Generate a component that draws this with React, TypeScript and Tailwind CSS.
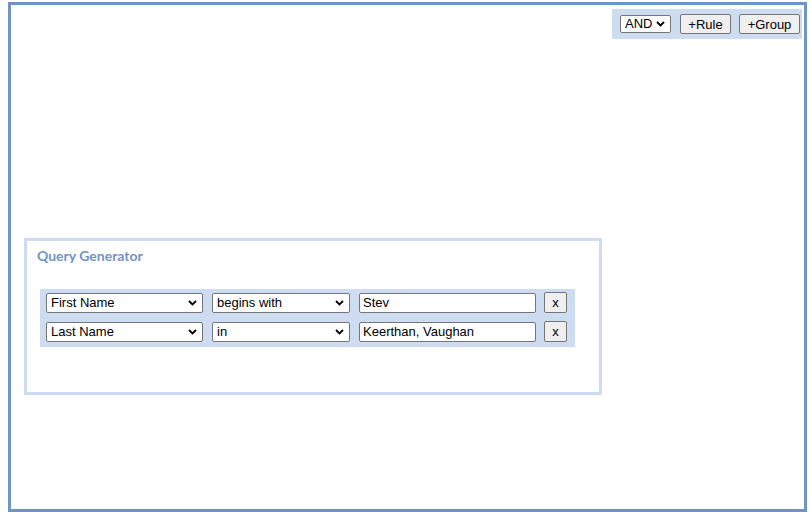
import React from 'react';

const Chevron: React.FC = () => (
  <svg className="pointer-events-none absolute right-[6px] top-1/2 -translate-y-1/2" width="9" height="6" viewBox="0 0 9 6">
    <path d="M1 1 L4.5 4.5 L8 1" fill="none" stroke="#000" strokeWidth="1.8" />
  </svg>
);

interface SelectProps {
  value: string;
  options: string[];
  className: string;
}

const Select: React.FC<SelectProps> = ({ value, options, className }) => (
  <div className={`relative ${className}`}>
    <select
      defaultValue={value}
      className="block h-full w-full appearance-none rounded-[2px] border border-[#767676] bg-white py-0 pl-[4px] pr-[18px] text-[13px] leading-[16px] text-black outline-none"
    >
      {options.map((o) => (
        <option key={o}>{o}</option>
      ))}
    </select>
    <Chevron />
  </div>
);

const Button: React.FC<{ label: string; className: string }> = ({ label, className }) => (
  <button className={`block rounded-[2px] border border-[#767676] bg-[#efefef] text-[13px] leading-none text-black ${className}`}>
    {label}
  </button>
);

const fields = ['First Name', 'Last Name', 'Email'];
const operators = ['begins with', 'in', 'equals', 'contains'];

const rules = [
  { field: 'First Name', op: 'begins with', value: 'Stev' },
  { field: 'Last Name', op: 'in', value: 'Keerthan, Vaughan' },
];

export default function App() {
  return (
    <div className="pl-[8px] pt-[2px] font-['Liberation_Sans',Arial,sans-serif]">
      <div className="h-[510px] w-[799px] border-[3px] border-[#7094c3] bg-white">
        {/* top-right group controls */}
        <div className="flex justify-end pr-[2px] pt-[4px]">
          <div className="flex h-[30px] w-[190px] items-center bg-[#cddcf0] pl-[8px]">
            <Select value="AND" options={['AND', 'OR']} className="h-[18px] w-[51px]" />
            <Button label="+Rule" className="ml-[9px] h-[20px] w-[51px]" />
            <Button label="+Group" className="ml-[8px] h-[20px] w-[61px]" />
          </div>
        </div>

        {/* Query Generator */}
        <div className="ml-[13px] mt-[199px] h-[157px] w-[578px] border-[3px] border-[#cddcf0] pl-[10px] pt-[5px]">
          <h2 className="font-['Lato',sans-serif] text-[14px] font-bold leading-[20px] text-[#7094c3]">Query Generator</h2>
          <div className="ml-[3px] mt-[23px] flex w-[535px] flex-col gap-[8px] bg-[#cddcf0] pb-[5px] pl-[6px] pt-[3px]">
            {rules.map((r) => (
              <div key={r.field} className="flex items-center">
                <Select value={r.field} options={fields} className="h-[20px] w-[157px]" />
                <Select value={r.op} options={operators} className="ml-[9px] h-[20px] w-[138px]" />
                <input
                  defaultValue={r.value}
                  className="ml-[9px] block h-[20px] w-[177px] rounded-[2px] border border-[#767676] bg-white px-[3px] text-[13px] text-black outline-none"
                />
                <Button label="x" className="ml-[8px] h-[21px] w-[23px]" />
              </div>
            ))}
          </div>
        </div>
      </div>
    </div>
  );
}
